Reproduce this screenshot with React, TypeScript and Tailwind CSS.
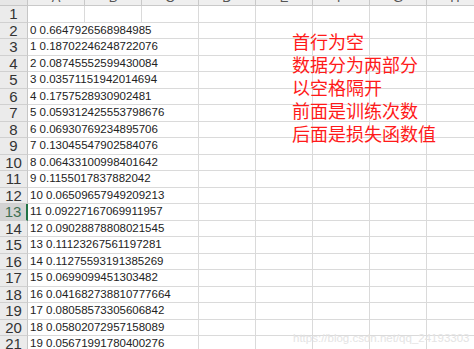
import React from "react";

const values = [
  "0 0.6647926568984985",
  "1 0.18702246248722076",
  "2 0.08745552599430084",
  "3 0.03571151942014694",
  "4 0.1757528930902481",
  "5 0.059312425553798676",
  "6 0.06930769234895706",
  "7 0.13045547902584076",
  "8 0.06433100998401642",
  "9 0.1155017837882042",
  "10 0.06509657949209213",
  "11 0.09227167069911957",
  "12 0.09028878808021545",
  "13 0.11123267561197281",
  "14 0.11275593191385269",
  "15 0.0699099451303482",
  "16 0.041682738810777664",
  "17 0.08058573305606842",
  "18 0.05802072957158089",
  "19 0.05671991780400276",
];

const letters = ["A", "B", "C", "D", "E", "F", "G", "H"];

const notes = ["首行为空", "数据分为两部分", "以空格隔开", "前面是训练次数", "后面是损失函数值"];

function RowHeader({ n }: { n: number }) {
  const selected = n === 13;
  return (
    <div
      className={
        "h-[16.5px] flex items-center justify-center text-[15px] leading-none border-b border-[#d0d0d0] " +
        (selected
          ? "bg-[#d3d3d3] text-[#3f6f52] border-r-2 border-r-[#217346]"
          : "bg-[#ebebeb] text-[#333] border-r border-r-[#c6c6c6]")
      }
    >
      {n}
    </div>
  );
}

export default function App() {
  const rows = Array.from({ length: 21 }, (_, i) => i + 1);

  return (
    <div className="relative w-[474px] h-[349px] overflow-hidden bg-white font-['Liberation_Sans',Arial,sans-serif]">
      <div className="grid grid-cols-[28px_repeat(8,57px)] w-max">
        {/* column header, scrolled so only the bottom shows */}
        <div className="h-[6px] bg-[#e6e6e6] border-b border-r border-[#c6c6c6]" />
        {letters.map((l) => (
          <div
            key={l}
            className="h-[6px] overflow-hidden bg-[#efefef] border-b border-r border-[#c9c9c9] flex items-end justify-center"
          >
            <span className="text-[13px] leading-[13px] text-[#555] mb-[1px]">{l}</span>
          </div>
        ))}

        {rows.map((n) => (
          <React.Fragment key={n}>
            <RowHeader n={n} />
            {n === 1 ? (
              <>
                <div className="h-[16.5px] border-r border-b border-[#dadada]" />
                <div className="h-[16.5px] border-r border-b border-[#dadada]" />
                <div className="h-[16.5px] border-r border-b border-[#dadada]" />
              </>
            ) : (
              <div className="col-span-3 h-[16.5px] border-r border-b border-[#dadada] flex items-center pl-[2px] text-[11.5px] text-[#222] whitespace-nowrap">
                {values[n - 2]}
              </div>
            )}
            {[0, 1, 2, 3, 4].map((c) => (
              <div key={c} className="h-[16.5px] border-r border-b border-[#dadada]" />
            ))}
          </React.Fragment>
        ))}
      </div>

      {/* floating text box */}
      <div className="absolute left-[292px] top-[30px] flex flex-col text-[18px] leading-[23px] text-[#ff1a1a] font-['Noto_Sans_CJK_SC',sans-serif]">
        {notes.map((t) => (
          <span key={t}>{t}</span>
        ))}
      </div>

      {/* watermark */}
      <div className="absolute left-[293px] top-[330px] text-[11.5px] text-[#e4e4e4] whitespace-nowrap">
        https://blog.csdn.net/qq_24193303
      </div>
    </div>
  );
}
